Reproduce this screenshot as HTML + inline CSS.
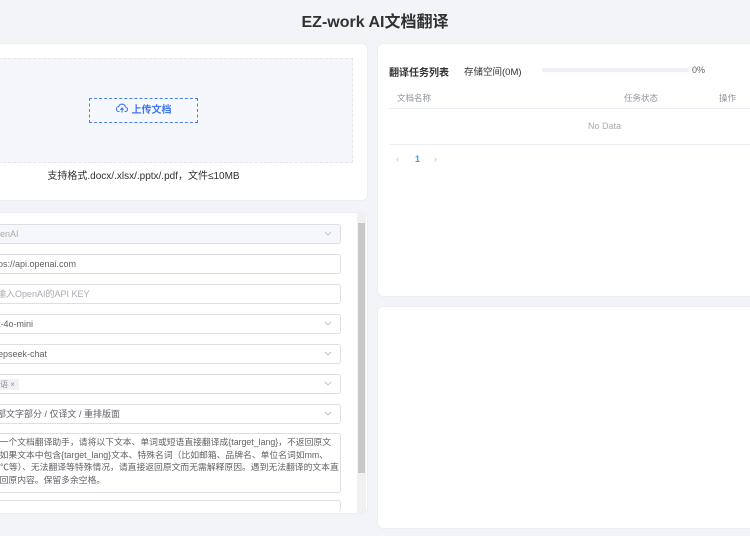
<!DOCTYPE html>
<html><head><meta charset="utf-8"><style>
body{margin:0;width:750px;height:536px;overflow:hidden;background:#f3f4f7;font-family:"Liberation Sans","Noto Sans CJK SC",sans-serif;position:relative}
.abs{position:absolute}
.card{position:absolute;background:#fff;border-radius:6px;border:1px solid #ebeef5}
.f{position:absolute;left:-17px;width:352px;height:18px;border:1px solid #dcdfe6;border-radius:3px;background:#fff;font-size:9px;color:#606266;line-height:18px;padding-left:4px;box-sizing:content-box;white-space:nowrap}
.ch{position:absolute;right:8px;top:6px}
</style></head><body>
<div class="abs" style="left:0;width:750px;top:8px;text-align:center;font-size:16px;font-weight:bold;color:#303133">EZ-work AI文档翻译</div>

<div class="card" style="left:-10px;top:43px;width:376px;height:156px"></div>
<div class="abs" style="left:-2px;top:58px;width:353px;height:103px;background:#f5f6fa;border:1px dashed #e4e7ed"></div>
<div class="abs" style="left:89px;top:98px;width:107px;height:23px;border:1px dashed #4a7ff0;background:#f5f8ff;color:#3f76f0;font-size:10px;font-weight:bold;line-height:23px;text-align:center">
<svg width="12" height="11" viewBox="0 0 24 22" style="vertical-align:-1px;margin-right:4px"><path d="M7 17H6a5 5 0 0 1-.5-10A7 7 0 0 1 19 8a4.5 4.5 0 0 1-1 9h-1M12 10v9M8.5 13.5L12 10l3.5 3.5" fill="none" stroke="#3f76f0" stroke-width="2.2"/></svg>上传文档</div>
<div class="abs" style="left:0;width:287px;top:167px;text-align:center;font-size:10px;color:#303133">支持格式.docx/.xlsx/.pptx/.pdf，文件≤10MB</div>

<div class="card" style="left:-10px;top:212px;width:376px;height:300px;overflow:hidden">
<div class="abs" style="left:366px;top:0;width:9px;height:300px;background:#f1f1f1"></div>
<div class="abs" style="left:367px;top:10px;width:7px;height:250px;background:#c8c8c8"></div>
</div>
<div class="f" style="top:224px;background:#f5f7fa;color:#a8abb2">OpenAI<svg class="ch" width="8" height="5" viewBox="0 0 8 5"><path d="M1 1l3 3 3-3" fill="none" stroke="#c0c4cc"/></svg></div>
<div class="f" style="top:254px">https://api.openai.com</div>
<div class="f" style="top:284px;color:#a8abb2">请输入OpenAI的API KEY</div>
<div class="f" style="top:314px">gpt-4o-mini<svg class="ch" width="8" height="5" viewBox="0 0 8 5"><path d="M1 1l3 3 3-3" fill="none" stroke="#c0c4cc"/></svg></div>
<div class="f" style="top:344px">deepseek-chat<svg class="ch" width="8" height="5" viewBox="0 0 8 5"><path d="M1 1l3 3 3-3" fill="none" stroke="#c0c4cc"/></svg></div>
<div class="f" style="top:374px"><span style="background:#f0f2f5;color:#909399;padding:1px 4px;font-size:8px">英语 ×</span><svg class="ch" width="8" height="5" viewBox="0 0 8 5"><path d="M1 1l3 3 3-3" fill="none" stroke="#c0c4cc"/></svg></div>
<div class="f" style="top:404px">全部文字部分 / 仅译文 / 重排版面<svg class="ch" width="8" height="5" viewBox="0 0 8 5"><path d="M1 1l3 3 3-3" fill="none" stroke="#c0c4cc"/></svg></div>
<div class="f" style="top:433px;height:56px;line-height:12.5px;padding-top:2px;font-size:8.8px;overflow:hidden">
<div style="margin-left:-6px">你是一个文档翻译助手，请将以下文本、单词或短语直接翻译成{target_lang}，不返回原文</div>
<div style="margin-left:-6px">本。如果文本中包含{target_lang}文本、特殊名词（比如邮箱、品牌名、单位名词如mm、</div>
<div style="margin-left:-6px">px、℃等）、无法翻译等特殊情况，请直接返回原文而无需解释原因。遇到无法翻译的文本直</div>
<div style="margin-left:-6px">接返回原内容。保留多余空格。</div></div>
<div class="f" style="top:500px;height:11px;border-bottom:none"></div>

<div class="card" style="left:377px;top:43px;width:380px;height:252px"></div>
<div class="abs" style="left:389px;top:64px;font-size:10px;font-weight:bold;color:#303133">翻译任务列表</div>
<div class="abs" style="left:464px;top:64px;font-size:9.5px;color:#303133">存储空间(0M)</div>
<div class="abs" style="left:542px;top:68px;width:147px;height:4px;border-radius:2px;background:#ebeef5"></div>
<div class="abs" style="left:692px;top:65px;font-size:9px;color:#606266">0%</div>
<div class="abs" style="left:397px;top:92px;font-size:8.5px;color:#909399">文档名称</div>
<div class="abs" style="left:624px;top:92px;font-size:8.5px;color:#909399">任务状态</div>
<div class="abs" style="left:719px;top:92px;font-size:8.5px;color:#909399">操作</div>
<div class="abs" style="left:389px;top:108px;width:361px;height:1px;background:#ebeef5"></div>
<div class="abs" style="left:588px;top:121px;font-size:9px;color:#a8abb2">No Data</div>
<div class="abs" style="left:389px;top:144px;width:361px;height:1px;background:#ebeef5"></div>
<div class="abs" style="left:396px;top:154px;font-size:9px;color:#c0c4cc">‹</div>
<div class="abs" style="left:415px;top:154px;font-size:9px;color:#409eff;font-weight:bold">1</div>
<div class="abs" style="left:434px;top:154px;font-size:9px;color:#c0c4cc">›</div>

<div class="card" style="left:377px;top:306px;width:380px;height:221px"></div>
</body></html>
